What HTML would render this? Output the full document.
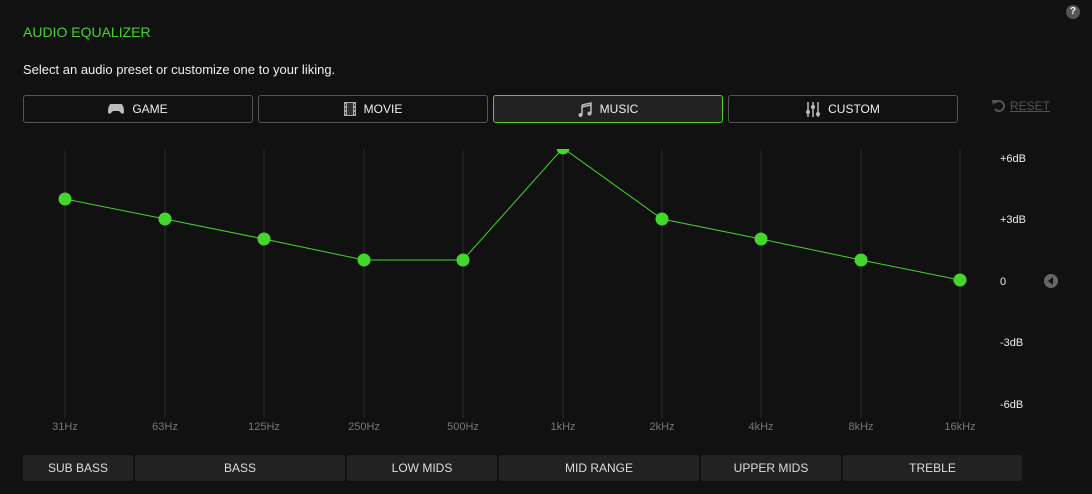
<!DOCTYPE html>
<html><head><style>
body{margin:0;width:1092px;height:494px;background:#111;font-family:"Liberation Sans",sans-serif;position:relative;overflow:hidden;color:#fff}
.a{position:absolute}
.btn{position:absolute;top:95px;border:1px solid #555;border-radius:3px;box-sizing:border-box;height:28px;display:flex;align-items:center;justify-content:center;font-size:12px;color:#eee;gap:8px}
.bb{position:absolute;top:455px;height:26px;background:#222;font-size:12px;color:#ddd;display:flex;align-items:center;justify-content:center;border-radius:2px}
.yl{position:absolute;left:1000px;font-size:11px;color:#eee}
.xl{position:absolute;top:421px;font-size:11px;color:#777;width:60px;text-align:center}
</style></head><body>
<div class="a" style="left:23px;top:24px;font-size:14px;color:#44d62c">AUDIO EQUALIZER</div>
<div class="a" style="left:23px;top:62px;font-size:13px;color:#eee">Select an audio preset or customize one to your liking.</div>
<div class="a" style="left:1066px;top:5px;width:14px;height:14px;border-radius:7px;background:#555;font-size:10px;font-weight:bold;text-align:center;line-height:14px">?</div>
<div class="btn" style="left:23px;width:230px"><svg width="16" height="12" viewBox="0 0 16 12"><path d="M3 1h10c2 0 3 4 3 8 0 2-2 2-3 1l-2-2H5L3 10c-1 1-3 1-3-1 0-4 1-8 3-8z" fill="#bbb"/></svg>GAME</div>
<div class="btn" style="left:258px;width:230px"><svg width="12" height="14" viewBox="0 0 12 14"><rect x="0" y="0" width="12" height="14" fill="#aaa"/><rect x="3" y="1" width="6" height="12" fill="#333"/><rect x="1" y="2" width="1" height="2" fill="#333"/><rect x="1" y="6" width="1" height="2" fill="#333"/><rect x="1" y="10" width="1" height="2" fill="#333"/><rect x="10" y="2" width="1" height="2" fill="#333"/><rect x="10" y="6" width="1" height="2" fill="#333"/><rect x="10" y="10" width="1" height="2" fill="#333"/></svg>MOVIE</div>
<div class="btn" style="left:493px;width:230px;border-color:#44d62c;background:#222"><svg width="14" height="15" viewBox="0 0 14 15"><path d="M4 3l9-2v10M4 3v10M4 5l9-2" stroke="#bbb" stroke-width="1.5" fill="none"/><circle cx="2.5" cy="13" r="2" fill="#bbb"/><circle cx="11.5" cy="11.5" r="2" fill="#bbb"/></svg>MUSIC</div>
<div class="btn" style="left:728px;width:230px"><svg width="14" height="15" viewBox="0 0 14 15"><path d="M2 0v15M7 0v15M12 0v15" stroke="#bbb" stroke-width="1.5"/><circle cx="2" cy="10" r="2" fill="#bbb"/><circle cx="7" cy="5" r="2" fill="#bbb"/><circle cx="12" cy="12" r="2" fill="#bbb"/></svg>CUSTOM</div>
<div class="a" style="left:992px;top:99px;font-size:12px;color:#555;display:flex;gap:4px;align-items:center"><svg width="14" height="14" viewBox="0 0 14 14"><path d="M3 4a5 5 0 1 1 0 6" stroke="#555" stroke-width="2" fill="none"/><path d="M0 1l5 0-4 5z" fill="#555"/></svg><span style="text-decoration:underline">RESET</span></div>
<svg class="a" style="left:0;top:0" width="1092" height="494">
<defs><clipPath id="c"><rect x="0" y="149" width="1092" height="300"/></clipPath></defs>
<g stroke="#2a2a2a" stroke-width="1">
<path d="M65 149V418M165 149V418M264 149V418M364 149V418M463 149V418M563 149V418M662 149V418M761 149V418M861 149V418M960 149V418"/>
</g>
<g clip-path="url(#c)">
<polyline points="65,199 165,219 264,239 364,260 463,260 563,148 662,219 761,239 861,260 960,280" stroke="#44d62c" stroke-width="1" fill="none"/>
<g fill="#44d62c"><circle cx="65" cy="199" r="6.5"/><circle cx="165" cy="219" r="6.5"/><circle cx="264" cy="239" r="6.5"/><circle cx="364" cy="260" r="6.5"/><circle cx="463" cy="260" r="6.5"/><circle cx="563" cy="148" r="6.5"/><circle cx="662" cy="219" r="6.5"/><circle cx="761" cy="239" r="6.5"/><circle cx="861" cy="260" r="6.5"/><circle cx="960" cy="280" r="6.5"/></g>
</g>
<circle cx="1051" cy="281" r="7" fill="#666"/><path d="M1053 277v8l-5-4z" fill="#111"/>
</svg>
<div class="yl" style="top:153px">+6dB</div>
<div class="yl" style="top:214px">+3dB</div>
<div class="yl" style="top:276px">0</div>
<div class="yl" style="top:337px">-3dB</div>
<div class="yl" style="top:399px">-6dB</div>
<div class="xl" style="left:35px">31Hz</div><div class="xl" style="left:135px">63Hz</div><div class="xl" style="left:234px">125Hz</div><div class="xl" style="left:334px">250Hz</div><div class="xl" style="left:433px">500Hz</div><div class="xl" style="left:533px">1kHz</div><div class="xl" style="left:632px">2kHz</div><div class="xl" style="left:731px">4kHz</div><div class="xl" style="left:831px">8kHz</div><div class="xl" style="left:930px">16kHz</div>
<div class="bb" style="left:23px;width:110px">SUB BASS</div>
<div class="bb" style="left:135px;width:210px">BASS</div>
<div class="bb" style="left:347px;width:150px">LOW MIDS</div>
<div class="bb" style="left:499px;width:200px">MID RANGE</div>
<div class="bb" style="left:701px;width:140px">UPPER MIDS</div>
<div class="bb" style="left:843px;width:179px">TREBLE</div>
</body></html>
